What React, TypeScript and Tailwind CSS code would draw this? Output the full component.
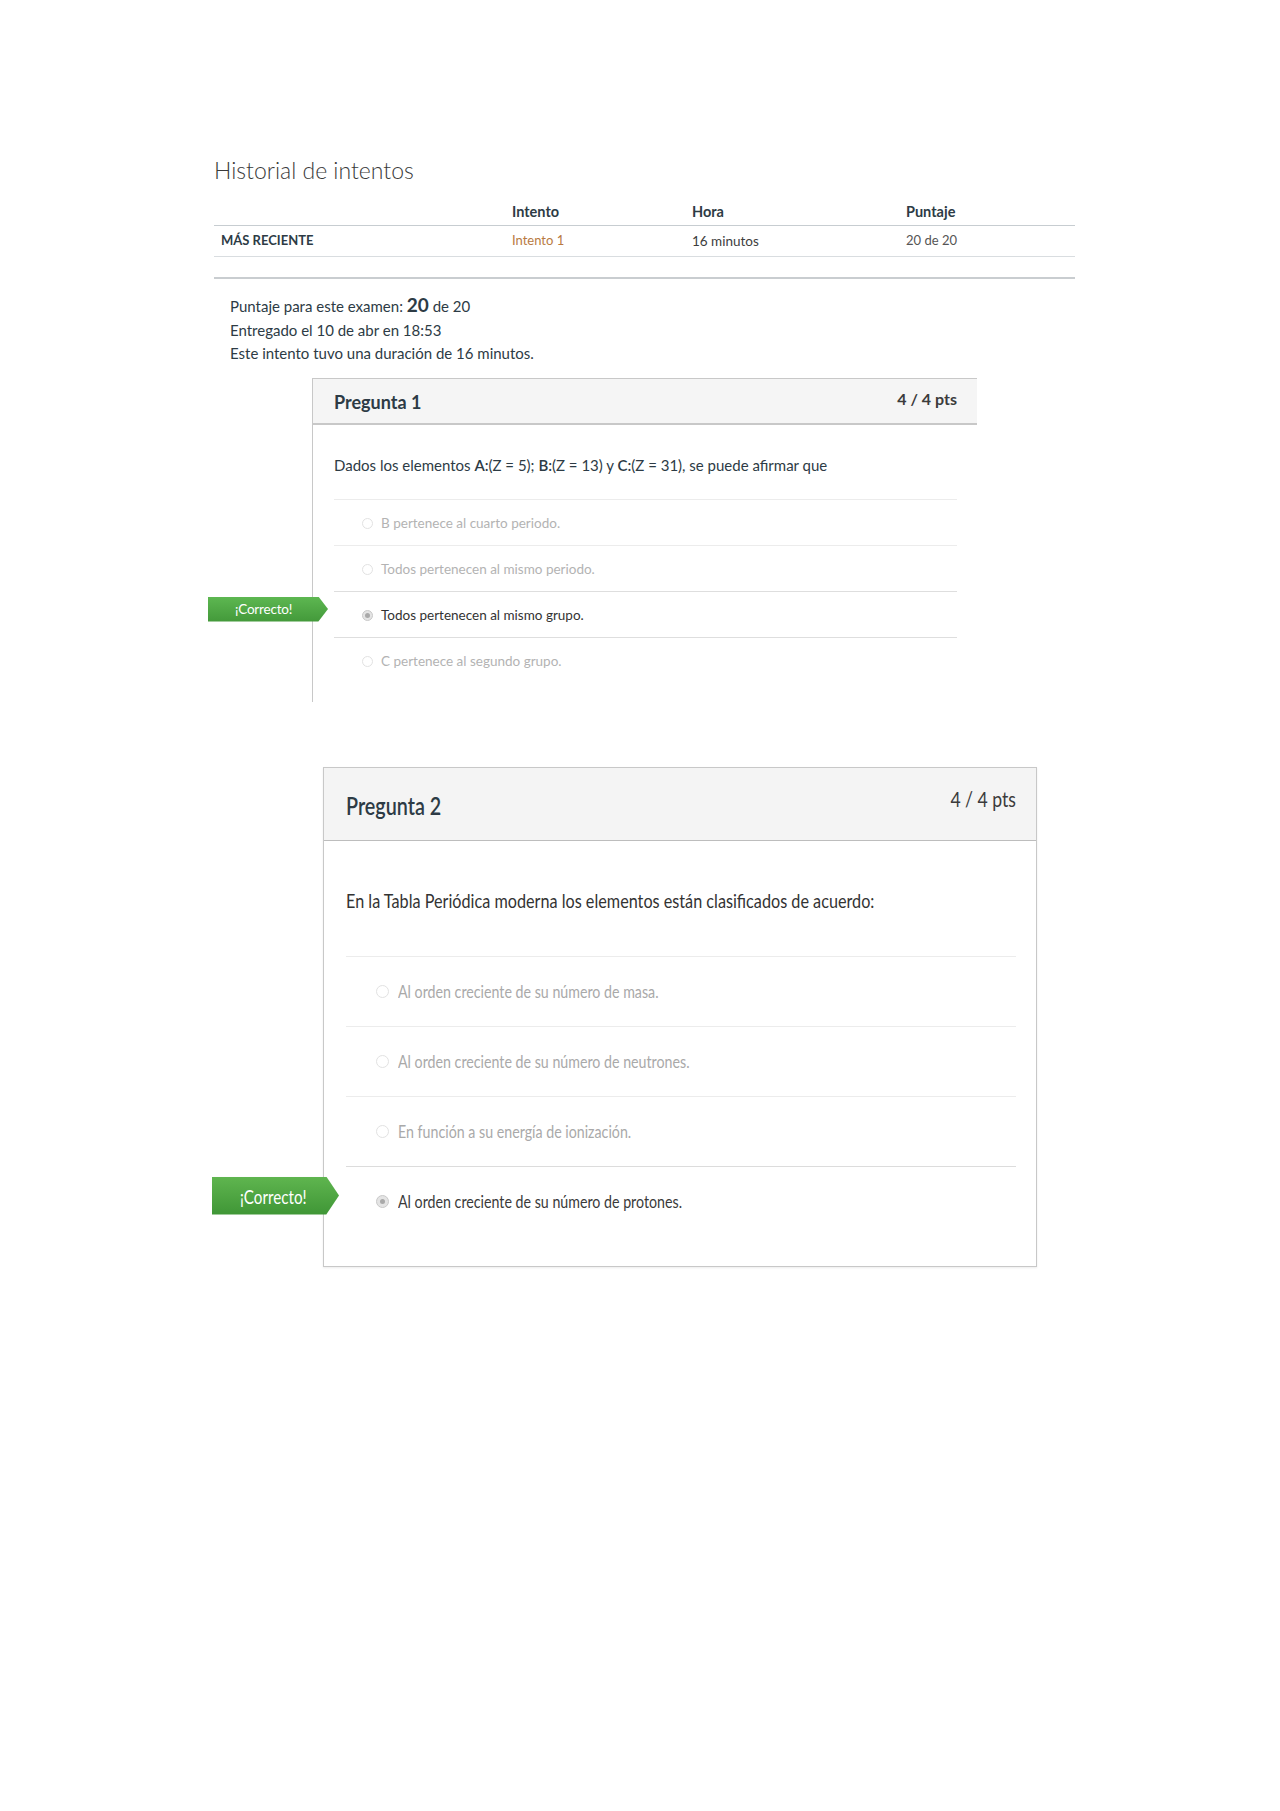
import React from "react";

type Answer = { text: string; selected?: boolean };

const q1Answers: Answer[] = [
    { text: "B pertenece al cuarto periodo." },
    { text: "Todos pertenecen al mismo periodo." },
    { text: "Todos pertenecen al mismo grupo.", selected: true },
    { text: "C pertenece al segundo grupo." },
];

const q2Answers: Answer[] = [
    { text: "Al orden creciente de su número de masa." },
    { text: "Al orden creciente de su número de neutrones." },
    { text: "En función a su energía de ionización." },
    { text: "Al orden creciente de su número de protones.", selected: true },
];

function Radio({ selected, size }: { selected?: boolean; size: "sm" | "lg" }) {
    const box = size === "sm" ? "w-[11px] h-[11px]" : "w-[13px] h-[13px]";
    if (selected) {
        return (
            <span className={`${box} shrink-0 rounded-full border border-[#c9c9c9] bg-[#e4e4e4] flex items-center justify-center`}>
                <span className="w-[5px] h-[5px] rounded-full bg-[#a9a9a9]" />
            </span>
        );
    }
    return <span className={`${box} shrink-0 rounded-full border border-[#e2e2e2] bg-white`} />;
}

function Badge({ big }: { big?: boolean }) {
    return big ? (
        <div className="absolute left-[-134px] top-[10px] w-[127px] h-[38px] bg-gradient-to-b from-[#5fb54f] to-[#3f9636] [clip-path:polygon(0_0,90%_0,100%_50%,90%_100%,0_100%)] flex items-center pl-[28px] shadow">
            <span className="inline-block origin-left scale-x-[0.76] text-white text-[20px] whitespace-nowrap">¡Correcto!</span>
        </div>
    ) : (
        <div className="absolute left-[-126px] top-[5px] w-[120px] h-[25px] bg-gradient-to-b from-[#5db751] to-[#43993a] [clip-path:polygon(0_0,92%_0,100%_50%,92%_100%,0_100%)] flex items-center pl-[27px]">
            <span className="text-white text-[13.5px] tracking-[-0.2px] whitespace-nowrap">¡Correcto!</span>
        </div>
    );
}

export default function App() {
    return (
        <div className="min-h-[1811px] w-full bg-white text-[#2d3b45]" style={{ fontFamily: "Lato, 'Open Sans', sans-serif" }}>
            <div className="ml-[214px] w-[861px] pt-[157px]">
                {/* Historial */}
                <h2 className="text-[23px] leading-[26px] text-[#3a3a3a] font-light">Historial de intentos</h2>

                <div className="mt-[16px]">
                    <div className="grid grid-cols-[298px_180px_214px_1fr] h-[27px] items-center border-b border-[#c7cdd1] text-[14.5px] font-bold text-[#2d3b45]">
                        <span />
                        <span>Intento</span>
                        <span>Hora</span>
                        <span>Puntaje</span>
                    </div>
                    <div className="grid grid-cols-[298px_180px_214px_1fr] h-[31px] items-center border-b border-[#d9dde0] text-[13px]">
                        <span className="pl-[7px] font-bold text-[#2d3b45]">MÁS RECIENTE</span>
                        <span className="text-[#b87a42]">Intento 1</span>
                        <span className="text-[#3d3d3d] text-[13.5px]">16 minutos</span>
                        <span className="text-[#555]">20 de 20</span>
                    </div>
                    <div className="h-[22px] border-b-2 border-[#c9cdd0]" />
                </div>

                <div className="mt-[14px] pl-[16px] text-[15px] leading-[23.5px] text-[#2d3b45]">
                    <p>
                        Puntaje para este examen: <span className="text-[19px] font-bold">20</span> de 20
                    </p>
                    <p>Entregado el 10 de abr en 18:53</p>
                    <p>Este intento tuvo una duración de 16 minutos.</p>
                </div>

                {/* Pregunta 1 */}
                <div className="mt-[12px] ml-[98px] w-[665px]">
                    <div className="h-[47px] bg-[#f5f5f5] border-t border-l border-b-2 border-[#c8c8c8] flex justify-between pl-[21px] pr-[20px]">
                        <span className="mt-[12px] text-[18px] leading-[22px] font-bold text-[#2d3b45]">Pregunta 1</span>
                        <span className="mt-[9px] text-[16px] leading-[22px] font-bold text-[#3b3b3b]">4 / 4 pts</span>
                    </div>
                    <div className="border-l border-[#c8c8c8] pl-[21px] pr-[20px] pb-[19px]">
                        <p className="pt-[30px] pb-[24px] text-[15px] leading-[20px] text-[#2d3b45]">
                            Dados los elementos <b className="font-semibold">A:</b>(Z = 5); <b className="font-semibold">B:</b>(Z = 13) y <b className="font-semibold">C:</b>(Z = 31), se puede afirmar que
                        </p>
                        {q1Answers.map((a, i) => (
                            <div key={i} className={`relative h-[46px] flex items-center gap-[8px] pl-[28px] pt-[2px] border-t ${a.selected || i === 3 ? "border-[#dedede]" : "border-[#ececec]"}`}>
                                {a.selected && <Badge />}
                                <Radio selected={a.selected} size="sm" />
                                <span className={`text-[13.5px] ${a.selected ? "text-[#333]" : "text-[#b3b3b3]"}`}>{a.text}</span>
                            </div>
                        ))}
                    </div>
                </div>

                {/* Pregunta 2 */}
                <div className="mt-[65px] ml-[109px] w-[714px] border border-[#c8c8c8] shadow-[0_1px_2px_rgba(0,0,0,0.08)]">
                    <div className="h-[73px] bg-[#f4f4f4] border-b border-[#bdbdbd] flex justify-between pl-[22px] pr-[20px]">
                        <span className="mt-[22px] inline-block origin-left scale-x-[0.79] text-[25px] leading-[30px] font-semibold text-[#2d3b45] whitespace-nowrap">Pregunta 2</span>
                        <span className="mt-[16px] inline-block origin-right scale-x-[0.8] text-[22px] leading-[30px] text-[#3b3b3b] whitespace-nowrap">4 / 4 pts</span>
                    </div>
                    <div className="pl-[22px] pr-[20px] pb-[30px]">
                        <p className="pt-[46px] pb-[41px] leading-[26px]">
                            <span className="inline-block origin-left scale-x-[0.81] text-[20px] text-[#333] whitespace-nowrap">
                                En la Tabla Periódica moderna los elementos están clasificados de acuerdo:
                            </span>
                        </p>
                        {q2Answers.map((a, i) => (
                            <div key={i} className={`relative h-[70px] flex items-center gap-[9px] pl-[30px] border-t ${a.selected ? "border-[#dcdcdc]" : "border-[#ececec]"}`}>
                                {a.selected && <Badge big />}
                                <Radio selected={a.selected} size="lg" />
                                <span className={`inline-block origin-left scale-x-[0.79] text-[18px] whitespace-nowrap ${a.selected ? "text-[#3a3a3a]" : "text-[#a9a9a9]"}`}>{a.text}</span>
                            </div>
                        ))}
                    </div>
                </div>
            </div>
        </div>
    );
}
